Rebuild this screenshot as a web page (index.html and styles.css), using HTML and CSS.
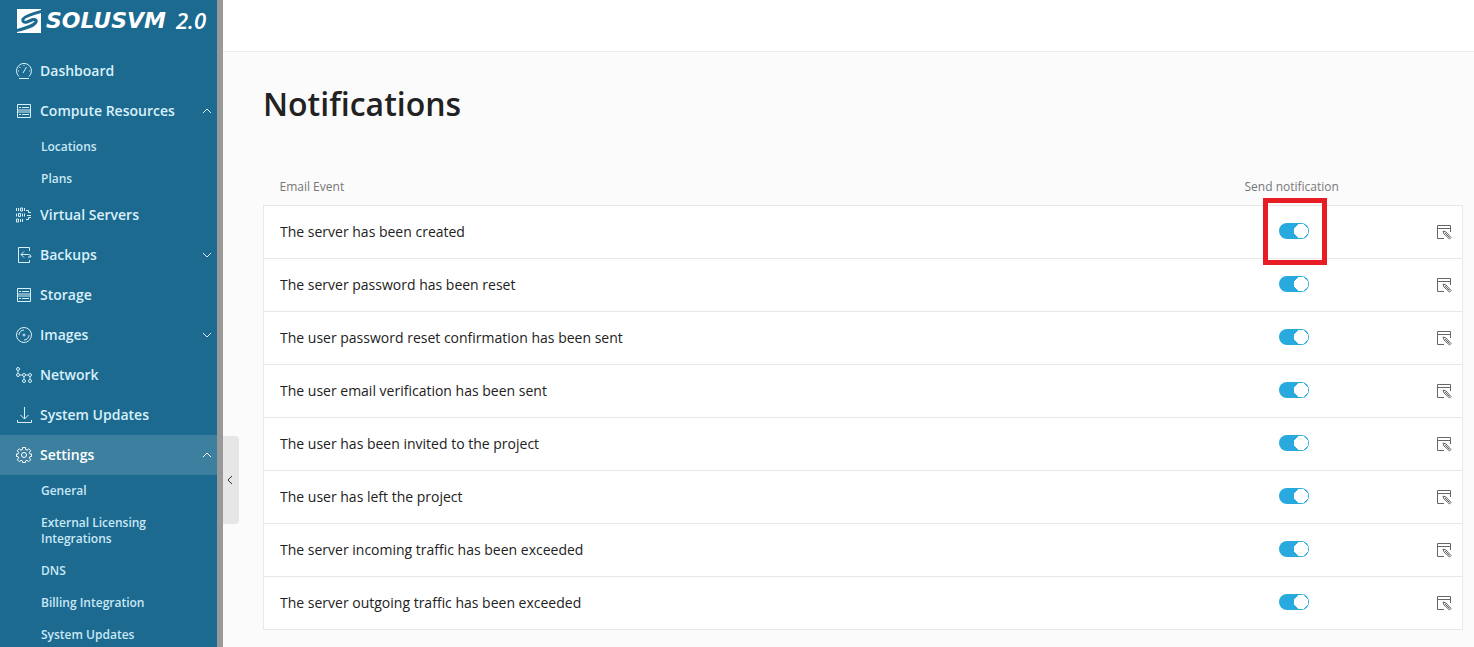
FILE: index.html
```html
<!DOCTYPE html>
<html lang="en">
<head>
    <meta charset="utf-8">
    <title>Notifications - SolusVM 2.0</title>
    <link rel="stylesheet" href="styles.css">
</head>
<body>

    <!-- Icons used more than once -->
    <svg class="sprite" aria-hidden="true">
        <symbol id="icon-server" viewBox="0 0 16 16">
            <path d="M1.500 1.500h13v13h-13zM1.500 7h13M1.500 9h13M3 4.500h2M6 4.500h7M3 11.500h2M6 11.500h7"/>
        </symbol>
        <symbol id="icon-up" viewBox="0 0 10 10">
            <path d="M1 7l4-4 4 4"/>
        </symbol>
        <symbol id="icon-down" viewBox="0 0 10 10">
            <path d="M1 3l4 4 4-4"/>
        </symbol>
        <symbol id="icon-edit" viewBox="0 0 16 16">
            <path d="M8 14.500H1.500v-13h13V8M1.500 4.500h13M7 7l1 3 5.500 5 1.500-1.500L10 8zM9 9l4.500 4.500"/>
        </symbol>
    </svg>

    <div class="sidebar">
        <a class="logo" href="#">
            <svg viewBox="0 0 24 24" aria-hidden="true">
                <path class="logo-bg" d="M0 0h24v24H0z"/>
                <path class="logo-cut" d="M26 2C14 5 8 7 6 10Q5 14 10 13L16 10.500Q20 10 19 13C17 17 10 19-2 22"/>
            </svg>
            <span class="logo-name">SOLUSVM</span>
            <span class="logo-version">2.0</span>
        </a>
        <ul class="nav">
            <li>
                <a class="nav-link" href="#">
                    <svg viewBox="0 0 16 16"><path d="M3 13.500a7.500 7.500 0 1 1 10 0M3 15.500h10M7 10l3.500-6M8 2v1M2 8h1M13 8h1M3.500 4l1 1"/></svg>
                    Dashboard
                </a>
            </li>
            <li>
                <a class="nav-link" href="#">
                    <svg><use href="#icon-server"/></svg>
                    Compute Resources
                    <svg class="arrow"><use href="#icon-up"/></svg>
                </a>
                <ul class="subnav">
                    <li><a href="#">Locations</a></li>
                    <li><a href="#">Plans</a></li>
                </ul>
            </li>
            <li>
                <a class="nav-link" href="#">
                    <svg viewBox="0 0 16 16"><path d="M.5 1v3M2.500 1v3M4.500 1h2v3h-2zM8.500 1v3M.5 6.500v3M2.500 6.500h2v3h-2zM6.500 6.500v3M8.500 6.500v3M.5 12h2v3h-2zM4.500 12v3M6.500 12v3M10 3.500h2.500v2H15M11 8.500h4M10 12.500h2.500v-2H15"/></svg>
                    Virtual Servers
                </a>
            </li>
            <li>
                <a class="nav-link" href="#">
                    <svg viewBox="0 0 16 16"><path d="M13.500 4V.5h-11v15h11V13M8 4.500l-3 3 3 3M5 7.500h7.500q2.500 0 2.500 2.500H12"/></svg>
                    Backups
                    <svg class="arrow"><use href="#icon-down"/></svg>
                </a>
            </li>
            <li>
                <a class="nav-link" href="#">
                    <svg><use href="#icon-server"/></svg>
                    Storage
                </a>
            </li>
            <li>
                <a class="nav-link" href="#">
                    <svg viewBox="0 0 16 16"><circle cx="8" cy="8" r="7.500"/><path d="M3 8a5 5 0 0 1 5-5M13 8a5 5 0 0 1-5 5"/><circle cx="8" cy="8" r="1"/></svg>
                    Images
                    <svg class="arrow"><use href="#icon-down"/></svg>
                </a>
            </li>
            <li>
                <a class="nav-link" href="#">
                    <svg viewBox="0 0 16 16"><path d="M2 4v2M4 8h2M10 8h2M8 10v2M14 10v2"/><circle cx="2" cy="2" r="1.500"/><circle cx="2" cy="8" r="1.500"/><circle cx="8" cy="8" r="1.500"/><circle cx="14" cy="8" r="1.500"/><circle cx="8" cy="14" r="1.500"/><circle cx="14" cy="14" r="1.500"/></svg>
                    Network
                </a>
            </li>
            <li>
                <a class="nav-link" href="#">
                    <svg viewBox="0 0 16 16"><path d="M8.500 0v12M4.500 8l4 4 4-4M1.500 13v2.500h14V13"/></svg>
                    System Updates
                </a>
            </li>
            <li>
                <a class="nav-link active" href="#">
                    <svg viewBox="0 0 16 16"><path d="M6.500.5h3v2l1.500.7 1.700-1.400 2 2-1.400 1.700.7 1.500h1.500v2.500h-1.500l-.7 1.500 1.400 1.700-2 2-1.700-1.400-1.500.7v1.500h-3V14L5 13.300l-1.700 1.400-2-2L2.700 11 2 9.500H.5V7H2l.7-1.500-1.400-1.700 2-2L5 3.200l1.500-.7z"/><circle cx="8" cy="8" r="2.500"/></svg>
                    Settings
                    <svg class="arrow"><use href="#icon-up"/></svg>
                </a>
                <ul class="subnav">
                    <li><a href="#">General</a></li>
                    <li><a href="#">External Licensing Integrations</a></li>
                    <li><a href="#">DNS</a></li>
                    <li><a href="#">Billing Integration</a></li>
                    <li><a href="#">System Updates</a></li>
                </ul>
            </li>
        </ul>
    </div>

    <div class="main">
        <button class="collapse" aria-label="Collapse sidebar">
            <svg viewBox="0 0 10 10"><path d="M7 1L3 5l4 4"/></svg>
        </button>
        <div class="topbar"></div>
        <div class="content">
            <h1>Notifications</h1>
            <table>
                <thead>
                    <tr>
                        <th>Email Event</th>
                        <th class="col-send">Send notification</th>
                        <th class="col-edit"></th>
                    </tr>
                </thead>
                <tbody>
                    <tr>
                        <td><label for="n1">The server has been created</label></td>
                        <td class="col-send"><div class="toggle highlight"><input type="checkbox" id="n1" checked></div></td>
                        <td class="col-edit"><button aria-label="Edit"><svg><use href="#icon-edit"/></svg></button></td>
                    </tr>
                    <tr>
                        <td><label for="n2">The server password has been reset</label></td>
                        <td class="col-send"><div class="toggle"><input type="checkbox" id="n2" checked></div></td>
                        <td class="col-edit"><button aria-label="Edit"><svg><use href="#icon-edit"/></svg></button></td>
                    </tr>
                    <tr>
                        <td><label for="n3">The user password reset confirmation has been sent</label></td>
                        <td class="col-send"><div class="toggle"><input type="checkbox" id="n3" checked></div></td>
                        <td class="col-edit"><button aria-label="Edit"><svg><use href="#icon-edit"/></svg></button></td>
                    </tr>
                    <tr>
                        <td><label for="n4">The user email verification has been sent</label></td>
                        <td class="col-send"><div class="toggle"><input type="checkbox" id="n4" checked></div></td>
                        <td class="col-edit"><button aria-label="Edit"><svg><use href="#icon-edit"/></svg></button></td>
                    </tr>
                    <tr>
                        <td><label for="n5">The user has been invited to the project</label></td>
                        <td class="col-send"><div class="toggle"><input type="checkbox" id="n5" checked></div></td>
                        <td class="col-edit"><button aria-label="Edit"><svg><use href="#icon-edit"/></svg></button></td>
                    </tr>
                    <tr>
                        <td><label for="n6">The user has left the project</label></td>
                        <td class="col-send"><div class="toggle"><input type="checkbox" id="n6" checked></div></td>
                        <td class="col-edit"><button aria-label="Edit"><svg><use href="#icon-edit"/></svg></button></td>
                    </tr>
                    <tr>
                        <td><label for="n7">The server incoming traffic has been exceeded</label></td>
                        <td class="col-send"><div class="toggle"><input type="checkbox" id="n7" checked></div></td>
                        <td class="col-edit"><button aria-label="Edit"><svg><use href="#icon-edit"/></svg></button></td>
                    </tr>
                    <tr>
                        <td><label for="n8">The server outgoing traffic has been exceeded</label></td>
                        <td class="col-send"><div class="toggle"><input type="checkbox" id="n8" checked></div></td>
                        <td class="col-edit"><button aria-label="Edit"><svg><use href="#icon-edit"/></svg></button></td>
                    </tr>
                </tbody>
            </table>
        </div>
    </div>

</body>
</html>
```
FILE: styles.css
```css
* {
    box-sizing: border-box;
}

body {
    display: flex;
    height: 100vh;
    margin: 0;
    overflow: hidden;
    font-family: "Open Sans", sans-serif;
    font-size: 14px;
    color: #222;
    background: #fbfbfb;
}

ul {
    margin: 0;
    padding: 0;
    list-style: none;
}

a {
    text-decoration: none;
}

svg {
    width: 16px;
    height: 16px;
    flex: none;
    fill: none;
    stroke: currentColor;
}

.sprite {
    position: absolute;
    width: 0;
    height: 0;
}

/* Sidebar */
.sidebar {
    flex: none;
    width: 223px;
    overflow-y: auto;
    scrollbar-width: none;
    background: #1d6a90;
    border-right: 6px solid #999;
}

.logo {
    display: flex;
    align-items: center;
    height: 42px;
    margin-bottom: 8px;
    padding-left: 17px;
    color: #fff;
    font-size: 22px;
    font-style: italic;
    line-height: 24px;
}

.logo svg {
    width: 24px;
    height: 24px;
    margin-right: 5px;
}

.logo-bg {
    fill: #fff;
    stroke: none;
}

.logo-cut {
    stroke: #1d6a90;
    stroke-width: 3;
}

.logo-name {
    font-family: "DejaVu Sans", sans-serif;
    font-weight: bold;
}

.logo-version {
    margin-left: 10px;
    padding-bottom: 2px;
    font-weight: 600;
}

.nav-link {
    display: flex;
    align-items: center;
    gap: 8px;
    height: 40px;
    padding: 0 5px 0 16px;
    color: #d8f0fa;
    font-weight: 600;
    line-height: 20px;
}

.nav-link.active {
    color: #fff;
    background: #3d7f9f;
}

.nav-link .arrow {
    width: 10px;
    height: 10px;
    margin-left: auto;
}

.nav {
    padding-top: 1px;
}

.subnav a {
    display: block;
    padding: 8px 40px 8px 41px;
    color: #c8e8f6;
    font-size: 12px;
    font-weight: 600;
    line-height: 16px;
}

/* Main area */
.main {
    position: relative;
    flex: 1;
    min-width: 0;
}

.topbar {
    height: 52px;
    background: #fff;
    border-bottom: 1px solid #ebebeb;
}

.content {
    padding: 28px 11px 0 40px;
}

h1 {
    margin: 0 0 44px;
    font-size: 32px;
    font-weight: 600;
    line-height: 48px;
}

button {
    padding: 0;
    border: none;
    background: none;
    color: #666;
    cursor: pointer;
}

.collapse {
    position: absolute;
    top: 436px;
    left: 0;
    display: flex;
    align-items: center;
    justify-content: center;
    width: 16px;
    height: 88px;
    padding-right: 2px;
    color: #333;
    background: #e6e6e6;
    border-radius: 0 4px 4px 0;
}

.collapse svg {
    width: 10px;
    height: 10px;
}

/* Notifications table */
table {
    width: 100%;
    border-collapse: collapse;
}

th {
    height: 33px;
    padding: 0 16px 4px;
    color: #777;
    font-size: 12px;
    font-weight: 400;
    text-align: left;
}

tbody {
    background: #fff;
    border: 1px solid #e8e8e8;
}

td {
    height: 53px;
    padding: 0 16px;
    border-top: 1px solid #e8e8e8;
}

.col-send {
    width: 132px;
    white-space: nowrap;
}

td.col-send {
    padding-right: 18px;
    padding-bottom: 2px;
}

.col-edit {
    width: 102px;
}

td.col-edit {
    padding-right: 10px;
    text-align: right;
}

.col-edit button,
.col-edit svg {
    display: block;
    margin-left: auto;
}

.toggle {
    position: relative;
    width: 30px;
    height: 16px;
    margin: 0 auto;
}

.toggle input {
    display: block;
    width: 30px;
    height: 16px;
    margin: 0;
    appearance: none;
    background: radial-gradient(circle at 8px 8px, #fff 7px, transparent 7px) #aaa;
    border-radius: 8px;
    cursor: pointer;
}

.toggle input:checked {
    background: radial-gradient(circle at 22px 8px, #fff 7px, transparent 7px) #28aade;
}

.highlight::after {
    content: "";
    position: absolute;
    top: -25px;
    left: -16px;
    box-sizing: border-box;
    width: 64px;
    height: 67px;
    border: 5px solid #e81c24;
    pointer-events: none;
}
```
